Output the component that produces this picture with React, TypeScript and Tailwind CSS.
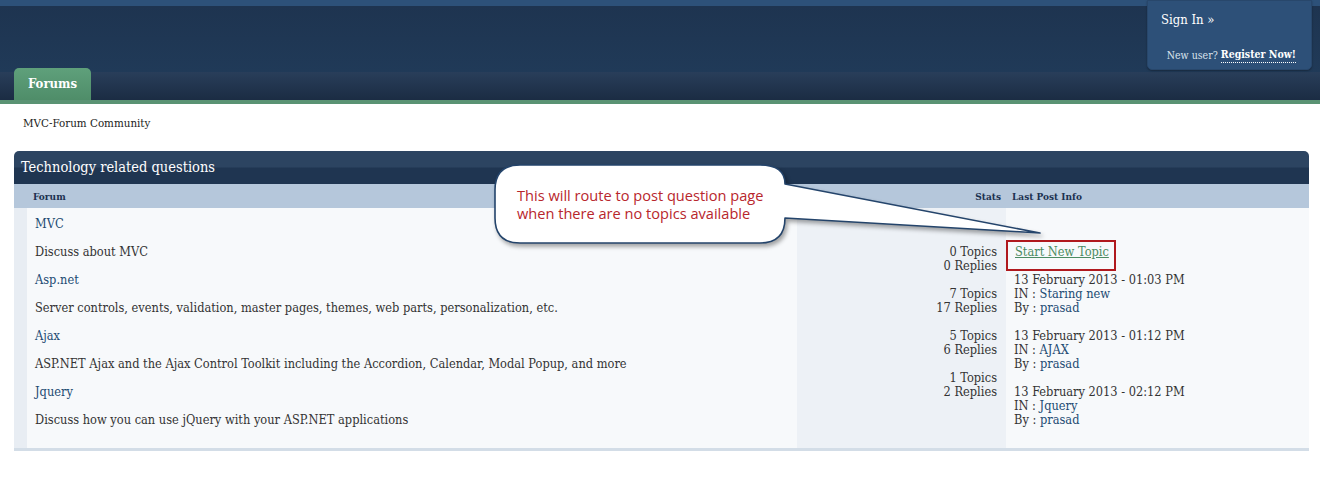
import React from "react";

const slab = { fontFamily: '"DejaVu Serif Condensed", "Liberation Serif", serif' };

type Forum = { name: string; desc: string };

const forums: Forum[] = [
  { name: "MVC", desc: "Discuss about MVC" },
  { name: "Asp.net", desc: "Server controls, events, validation, master pages, themes, web parts, personalization, etc." },
  { name: "Ajax", desc: "ASP.NET Ajax and the Ajax Control Toolkit including the Accordion, Calendar, Modal Popup, and more" },
  { name: "Jquery", desc: "Discuss how you can use jQuery with your ASP.NET applications" },
];

const stats = [
  ["0 Topics", "0 Replies"],
  ["7 Topics", "17 Replies"],
  ["5 Topics", "6 Replies"],
  ["1 Topics", "2 Replies"],
];

const posts = [
  { date: "13 February 2013 - 01:03 PM", topic: "Staring new" },
  { date: "13 February 2013 - 01:12 PM", topic: "AJAX" },
  { date: "13 February 2013 - 02:12 PM", topic: "Jquery" },
];

function Callout() {
  return (
    <div className="absolute left-[480px] top-[155px] w-[580px] h-[100px]">
      <svg width="580" height="100" viewBox="480 155 580 100" className="absolute inset-0 drop-shadow-[2px_3px_2px_rgba(0,0,0,0.35)]">
        <path
          d="M520 165 H760 Q785 165 785 184 L1040 233 L785 218 Q785 243 760 243 H520 Q495 243 495 218 V190 Q495 165 520 165 Z"
          fill="#ffffff"
          stroke="#24446b"
          strokeWidth="1.6"
          strokeLinejoin="round"
        />
      </svg>
      <div
        className="absolute left-[37px] top-[31px] text-[14.6px] leading-[18px] text-[#b8262c]"
        style={{ fontFamily: '"Open Sans", "Liberation Sans", sans-serif' }}
      >
        <div>This will route to post question page</div>
        <div>when there are no topics available</div>
      </div>
    </div>
  );
}

export default function App() {
  return (
    <div className="relative w-[1320px] h-[480px] bg-white overflow-hidden text-[#333]" style={slab}>
      {/* header */}
      <div className="relative h-[104px]">
        <div className="h-[6px] bg-[#2d5179]" />
        <div className="h-[66px] bg-gradient-to-b from-[#1e3450] to-[#203a58]" />
        <div className="h-[28px] bg-gradient-to-b from-[#293e5a] to-[#1b2c43] flex items-end pl-[14px]">
          <div className="w-[77px] h-[32px] rounded-t-[5px] bg-gradient-to-b from-[#5fa07b] to-[#4f8d69] flex items-center justify-center text-white font-bold text-[13px]">
            Forums
          </div>
        </div>
        <div className="h-[4px] bg-[#5a9373]" />
        <div className="absolute left-[1147px] top-0 w-[165px] h-[70px] bg-[#2d5078] rounded-b-[5px] border border-[#28476b] shadow-[0_1px_2px_rgba(0,0,0,0.3)]">
          <div className="pl-[13px] pt-[9px] text-white text-[13px]">Sign In »</div>
          <div className="flex justify-end pr-[15px] pt-[18px] text-[10.5px] text-[#dbe4ee]">
            New user?&nbsp;
            <span className="text-white font-bold border-b border-dotted border-white leading-[13px]">Register Now!</span>
          </div>
        </div>
      </div>

      {/* breadcrumb */}
      <div className="pl-[23px] pt-[11px] text-[11.5px] text-[#222]">MVC-Forum Community</div>

      {/* table */}
      <div className="mx-[14px] mt-[19px] w-[1295px]">
        <div className="h-[33px] rounded-t-[5px] bg-[linear-gradient(#2c4461_0,#2c4461_48%,#1f3551_52%,#1f3551_100%)] flex items-center pl-[7px] pt-[1px] text-white text-[14.5px]">
          Technology related questions
        </div>
        <div className="h-[24px] bg-[#b5c7db] flex items-center text-[10px] font-bold text-[#1c3150]">
          <div className="w-[783px] pl-[19px]">Forum</div>
          <div className="w-[209px] text-right pr-[5px]">Stats</div>
          <div className="flex-1 pl-[6px]">Last Post Info</div>
        </div>
        <div className="flex h-[240px] bg-[#f7f9fb] text-[12.7px]">
          <div className="w-[13px] bg-[#e8edf3]" />
          <div className="w-[770px] pl-[8px] pt-[2px]">
            {forums.map((f) => (
              <div key={f.name}>
                <div className="h-[28px] leading-[28px] text-[#234b73]">{f.name}</div>
                <div className="h-[28px] leading-[28px]">{f.desc}</div>
              </div>
            ))}
          </div>
          <div className="w-[209px] bg-[#edf1f6] pr-[9px] pt-[37px] flex flex-col gap-[14px] text-right">
            {stats.map((s) => (
              <div key={s[0] + s[1]} className="leading-[14px]">
                <div>{s[0]}</div>
                <div>{s[1]}</div>
              </div>
            ))}
          </div>
          <div className="flex-1 pt-[32px]">
            <div className="w-[110px] h-[31px] border-2 border-[#b0191e] pl-[7px] pt-[3px] text-[#4b8b62] underline leading-[14px]">
              Start New Topic
            </div>
            <div className="flex flex-col gap-[14px] pl-[8px] pt-[2px] leading-[14px]">
              {posts.map((p) => (
                <div key={p.date}>
                  <div>{p.date}</div>
                  <div>
                    IN : <span className="text-[#234b73]">{p.topic}</span>
                  </div>
                  <div>
                    By : <span className="text-[#234b73]">prasad</span>
                  </div>
                </div>
              ))}
            </div>
          </div>
        </div>
        <div className="h-[3px] bg-[#d3dde7]" />
      </div>

      <Callout />
    </div>
  );
}
